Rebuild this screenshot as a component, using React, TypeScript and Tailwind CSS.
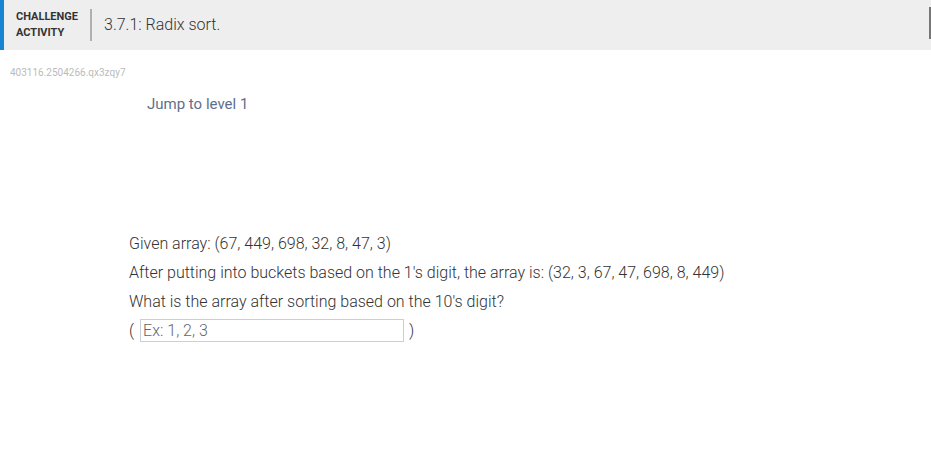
import React from "react";

export default function App() {
  return (
    <div className="w-[931px] h-[467px] bg-white overflow-hidden" style={{ fontFamily: "Roboto, 'Noto Sans', sans-serif" }}>
      <div className="h-[50px] bg-[#eeeeee] flex items-center">
        <div className="w-[4px] h-[50px] bg-[#1585d3]" />
        <div className="pl-[12px] pr-[12px] text-[11px] font-bold leading-[16px] text-[#333]">
          <div>CHALLENGE</div>
          <div>ACTIVITY</div>
        </div>
        <div className="w-[2px] h-[32px] bg-[#b0b0b0]" />
        <div className="pl-[12px] text-[16px] font-light text-[#333]">3.7.1: Radix sort.</div>
        <div className="ml-auto self-start mt-[7px] h-[32px] w-[2px] border-l-2 border-t border-b border-[#777]" />
      </div>
      <div className="pl-[10px] pt-[17px] text-[10px] text-[#bbbbbb] leading-[12px]">403116.2504266.qx3zqy7</div>
      <div className="pl-[147px] pt-[15px] text-[15px] text-[#5d6f8c] leading-[20px]">Jump to level 1</div>
      <div className="pl-[129px] pt-[115px] text-[16px] font-light text-[#333] leading-[29px]">
        <div>Given array: (67, 449, 698, 32, 8, 47, 3)</div>
        <div>After putting into buckets based on the 1's digit, the array is: (32, 3, 67, 47, 698, 8, 449)</div>
        <div>What is the array after sorting based on the 10's digit?</div>
        <div className="flex items-center">
          <span>(</span>
          <input
            placeholder="Ex: 1, 2, 3"
            className="ml-[6px] w-[264px] h-[23px] border border-[#c8d0d8] px-[2px] text-[16px] font-light text-[#333] placeholder:text-[#666] outline-none"
          />
          <span className="ml-[5px]">)</span>
        </div>
      </div>
    </div>
  );
}
